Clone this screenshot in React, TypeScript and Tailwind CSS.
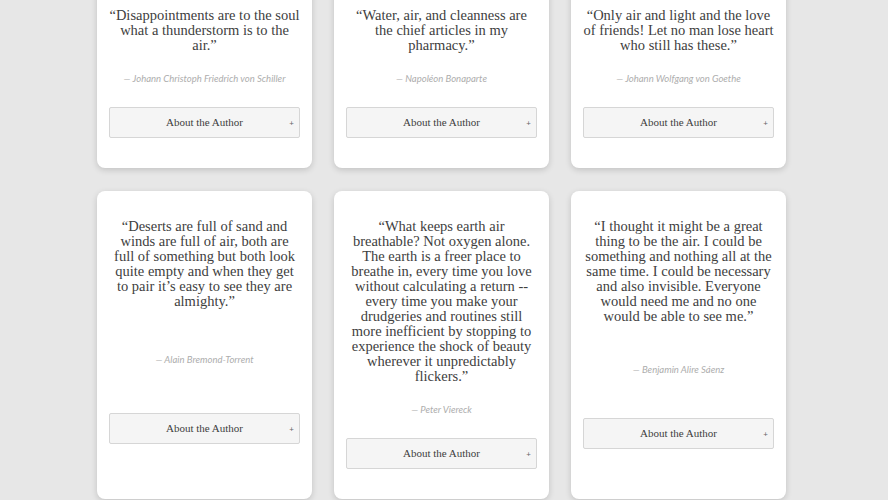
import React from "react";

interface Quote {
  text: string;
  author: string;
}

const QUOTES: Quote[] = [
  {
    text: "Disappointments are to the soul what a thunderstorm is to the air.",
    author: "Johann Christoph Friedrich von Schiller",
  },
  {
    text: "Water, air, and cleanness are the chief articles in my pharmacy.",
    author: "Napoléon Bonaparte",
  },
  {
    text: "Only air and light and the love of friends! Let no man lose heart who still has these.",
    author: "Johann Wolfgang von Goethe",
  },
  {
    text: "Deserts are full of sand and winds are full of air, both are full of something but both look quite empty and when they get to pair it’s easy to see they are almighty.",
    author: "Alain Bremond-Torrent",
  },
  {
    text: "What keeps earth air breathable? Not oxygen alone. The earth is a freer place to breathe in, every time you love without calculating a return -- every time you make your drudgeries and routines still more inefficient by stopping to experience the shock of beauty wherever it unpredictably flickers.",
    author: "Peter Viereck",
  },
  {
    text: "I thought it might be a great thing to be the air. I could be something and nothing all at the same time. I could be necessary and also invisible. Everyone would need me and no one would be able to see me.",
    author: "Benjamin Alire Sáenz",
  },
];

const serif = "font-['Liberation_Serif',serif]";

const QuoteCard = ({ quote }: { quote: Quote }) => (
  <div className="flex flex-col rounded-lg bg-white px-3 pt-7 pb-[30px] shadow-[0_2px_6px_rgba(0,0,0,0.16)]">
    <div className="grow">
      <p className={`${serif} text-center text-[14.5px] leading-[15px] text-[#404040]`}>
        “{quote.text}”
      </p>
    </div>
    <div className="grow">
      <p className="mt-[19px] text-center font-['Lato',sans-serif] text-[9.5px] italic leading-[14px] text-[#adadad]">
        — {quote.author}
      </p>
    </div>
    <div className="grow">
      <button className="relative mt-[21px] flex h-[31px] w-full items-center justify-center rounded-[2px] border border-[#d6d6d6] bg-[#f5f5f5]">
        <span className={`${serif} text-[11px] text-[#3d3d3d]`}>About the Author</span>
        <span className="absolute right-[5px] font-['Lato',sans-serif] text-[8px] text-[#666]">+</span>
      </button>
    </div>
  </div>
);

export default function App() {
  return (
    <div className="min-h-screen overflow-hidden bg-[#e7e7e7]">
      <div className="-mt-[20px] ml-[97px] grid w-[689px] grid-cols-[repeat(3,215px)] gap-x-[22px] gap-y-[23px]">
        {QUOTES.map((q, i) => (
          <QuoteCard key={i} quote={q} />
        ))}
      </div>
    </div>
  );
}
